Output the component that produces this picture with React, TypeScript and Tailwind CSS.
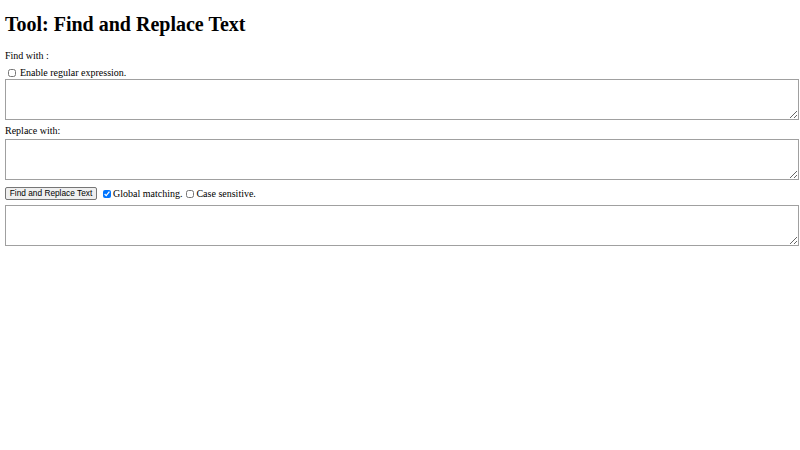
import React from 'react';

const serif = { fontFamily: '"Liberation Serif", "Times New Roman", serif' };

export default function App() {
  return (
    <div className="min-h-[450px] bg-white px-[5px] text-[10px] leading-[12px] text-black" style={serif}>
      <h1 className="pt-[12px] pb-[12px] text-[20px] font-bold leading-[24px]">Tool: Find and Replace Text</h1>

      <p className="mt-[2px]">Find with :</p>
      <label className="mt-[5px] flex h-[12px] items-center">
        <input type="checkbox" className="ml-[3px] mr-[4px] h-[8px] w-[8px]" />
        <span>Enable regular expression.</span>
      </label>
      <textarea className="block h-[41px] w-[794px] resize-y border border-[#a0a0a0]" />

      <p className="mt-[5px]">Replace with:</p>
      <textarea className="mt-[2px] block h-[41px] w-[794px] resize-y border border-[#a0a0a0]" />

      <div className="mt-[7px] flex h-[13px] items-center">
        <button
          type="button"
          className="h-[13px] w-[92px] rounded-[2px] border border-[#767676] bg-[#efefef] text-[8.3px] leading-[11px] text-black"
          style={{ fontFamily: '"Liberation Sans", Arial, sans-serif' }}
        >
          Find and Replace Text
        </button>
        <input type="checkbox" defaultChecked className="ml-[6px] mr-[2px] h-[8px] w-[8px] accent-[#0075ff]" />
        <span>Global matching.</span>
        <input type="checkbox" className="ml-[4px] mr-[2px] h-[8px] w-[8px]" />
        <span>Case sensitive.</span>
      </div>
      <textarea className="mt-[5px] block h-[41px] w-[794px] resize-y border border-[#a0a0a0]" />
    </div>
  );
}
